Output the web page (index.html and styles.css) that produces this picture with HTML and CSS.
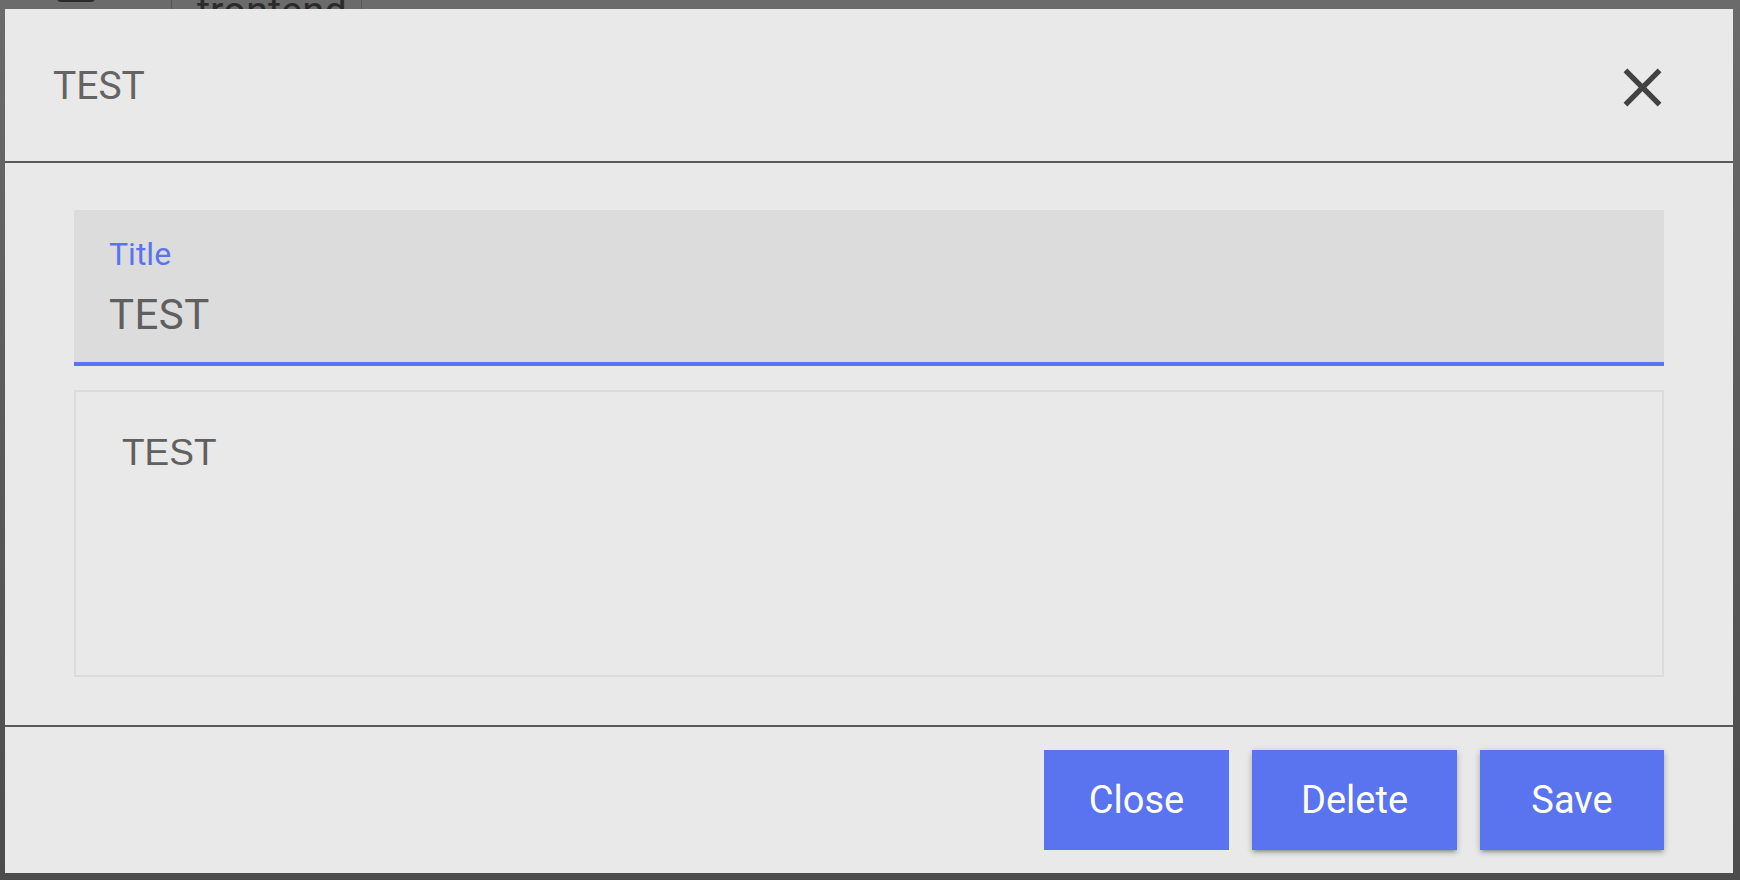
FILE: index.html
```html
<!DOCTYPE html>
<html lang="en">
<head>
<meta charset="utf-8">
<title>TEST</title>
<link rel="stylesheet" href="styles.css">
</head>
<body>
<div class="page">
  <div class="topbar">
    <span class="topbar-icon"></span>
    <div class="tab"><span class="tab-label">frontend</span></div>
  </div>
</div>

<div class="dialog" role="dialog" aria-labelledby="dlg-title">
  <header class="dialog-header">
    <h2 class="dialog-title" id="dlg-title">TEST</h2>
    <button class="icon-btn" aria-label="Close">
      <svg viewBox="0 0 24 24" width="65" height="65" aria-hidden="true"><path fill="currentColor" d="M19 6.41L17.59 5 12 10.59 6.41 5 5 6.41 10.59 12 5 17.59 6.41 19 12 13.41 17.59 19 19 17.59 13.41 12z"/></svg>
    </button>
  </header>
  <div class="dialog-body">
    <div class="field">
      <label class="field-label" for="title-input">Title</label>
      <div class="field-value" id="title-input">TEST</div>
    </div>
    <div class="textbox">TEST</div>
  </div>
  <footer class="dialog-footer">
    <button class="btn btn-flat btn-close">Close</button>
    <button class="btn btn-delete">Delete</button>
    <button class="btn btn-save">Save</button>
  </footer>
</div>
</body>
</html>
```

FILE: styles.css
```css
* { box-sizing: border-box; }

html, body {
  margin: 0;
  height: 100%;
}

body {
  background: linear-gradient(180deg, #6b6b6b 0%, #5d5d5d 40%, #4c4c4c 100%);
  font-family: Roboto, "Liberation Sans", Arial, sans-serif;
  overflow: hidden;
}

.page {
  height: 100%;
}

.topbar {
  display: flex;
  align-items: flex-start;
  height: 40px;
}

.topbar-icon {
  width: 38px;
  height: 14px;
  margin: -12px 0 0 57px;
  background: #2a2a2a;
  border-radius: 4px;
}

.tab {
  margin-left: 76px;
  width: 191px;
  height: 40px;
  border-left: 1px solid #555;
  border-right: 1px solid #555;
  padding-left: 24px;
  overflow: hidden;
}

.tab-label {
  display: block;
  margin-top: -8px;
  font-size: 40px;
  line-height: 40px;
  color: #2b2b2b;
}

.dialog {
  position: fixed;
  left: 5px;
  top: 9px;
  width: 1728px;
  height: 864px;
  background: #e9e9e9;
  display: flex;
  flex-direction: column;
}

.dialog-header {
  height: 154px;
  flex: none;
  display: flex;
  align-items: center;
  justify-content: space-between;
  padding: 2px 58px 0 48px;
  border-bottom: 2px solid #5a5a5a;
}

.dialog-title {
  margin: 0;
  font-weight: 400;
  font-size: 39px;
  line-height: 40px;
  color: #646464;
}

.icon-btn {
  border: 0;
  background: none;
  padding: 0;
  width: 65px;
  height: 65px;
  color: #424242;
  display: flex;
  margin-top: 2px;
}

.dialog-body {
  flex: 1;
  display: flex;
  flex-direction: column;
  gap: 24px;
  padding: 47px 69px 48px;
}

.field {
  height: 156px;
  background: #dcdcdc;
  border-bottom: 4px solid #5a73ee;
  padding: 28px 0 0 35px;
}

.field-label {
  display: block;
  font-size: 32px;
  line-height: 32px;
  color: #5a73ee;
}

.field-value {
  margin-top: 24px;
  font-size: 42px;
  line-height: 42px;
  color: #5f5f5f;
  letter-spacing: 0.01em;
}

.textbox {
  height: 287px;
  border: 2px solid #dbdbdb;
  padding: 42px 0 0 46px;
  font-family: "Liberation Sans", Arial, sans-serif;
  font-size: 37px;
  line-height: 38px;
  color: #606060;
}

.dialog-footer {
  height: 148px;
  flex: none;
  border-top: 2px solid #5a5a5a;
  display: flex;
  justify-content: flex-end;
  align-items: flex-start;
  gap: 23px;
  padding: 23px 69px 0 0;
}

.btn {
  height: 100px;
  border: 0;
  border-radius: 0;
  background: #5a73ee;
  color: #ffffff;
  font-family: Roboto, "Liberation Sans", Arial, sans-serif;
  font-size: 38px;
  padding: 0;
  box-shadow: 0 3px 3px -2px rgba(0,0,0,.25), 0 3px 5px 0 rgba(0,0,0,.16), 0 1px 8px 0 rgba(0,0,0,.12);
}

.btn-flat { box-shadow: none; }
.btn-close { width: 185px; }
.btn-delete { width: 205px; }
.btn-save { width: 184px; }
```
